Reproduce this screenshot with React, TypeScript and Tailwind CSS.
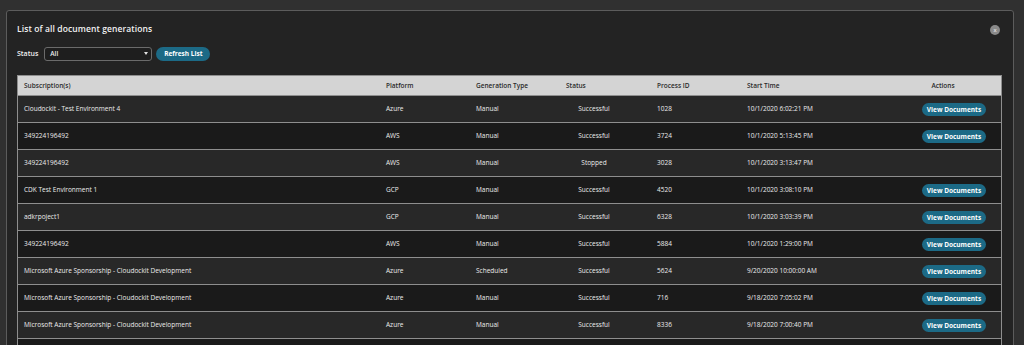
import React from "react";

type Row = {
  sub: string;
  platform: string;
  type: string;
  status: string;
  pid: string;
  start: string;
  action: boolean;
};

const rows: Row[] = [
  { sub: "Cloudockit - Test Environment 4", platform: "Azure", type: "Manual", status: "Successful", pid: "1028", start: "10/1/2020 6:02:21 PM", action: true },
  { sub: "349224196492", platform: "AWS", type: "Manual", status: "Successful", pid: "3724", start: "10/1/2020 5:13:45 PM", action: true },
  { sub: "349224196492", platform: "AWS", type: "Manual", status: "Stopped", pid: "3028", start: "10/1/2020 3:13:47 PM", action: false },
  { sub: "CDK Test Environment 1", platform: "GCP", type: "Manual", status: "Successful", pid: "4520", start: "10/1/2020 3:08:10 PM", action: true },
  { sub: "adkrpoject1", platform: "GCP", type: "Manual", status: "Successful", pid: "6328", start: "10/1/2020 3:03:39 PM", action: true },
  { sub: "349224196492", platform: "AWS", type: "Manual", status: "Successful", pid: "5884", start: "10/1/2020 1:29:00 PM", action: true },
  { sub: "Microsoft Azure Sponsorship - Cloudockit Development", platform: "Azure", type: "Scheduled", status: "Successful", pid: "5624", start: "9/20/2020 10:00:00 AM", action: true },
  { sub: "Microsoft Azure Sponsorship - Cloudockit Development", platform: "Azure", type: "Manual", status: "Successful", pid: "716", start: "9/18/2020 7:05:02 PM", action: true },
  { sub: "Microsoft Azure Sponsorship - Cloudockit Development", platform: "Azure", type: "Manual", status: "Successful", pid: "8336", start: "9/18/2020 7:00:40 PM", action: true },
  { sub: "", platform: "", type: "", status: "", pid: "", start: "", action: false },
];

export default function App() {
  return (
    <div
      className="w-[1024px] h-[345px] overflow-hidden bg-[#303030] pt-[10px] pl-[6px] pr-[10px] text-[#ececec]"
      style={{ fontFamily: '"Open Sans", "Noto Sans", sans-serif' }}
    >
      <div className="h-[400px] bg-[#232323] border border-[#5c5c5c] rounded-t-[3px] pl-[10px] pr-[11px] pt-[12px]">
        <div className="flex items-center justify-between h-[12px]">
          <div className="text-[8.5px] font-semibold text-[#f2f2f2] tracking-[0.1px]">List of all document generations</div>
          <div className="w-[10px] h-[10px] rounded-full bg-[#8a8a8a] text-white text-[6px] leading-[10px] text-center mr-[2px] mt-[2px]">x</div>
        </div>
        <div className="flex items-center mt-[12px] h-[14px]">
          <span className="text-[7px] font-semibold text-[#f2f2f2] mr-[6px]">Status</span>
          <div className="relative w-[108px] h-[14px] border border-[#6b6b6b] rounded-[3px] bg-[#1e1e1e] text-[6.5px] font-semibold leading-[12px] pl-[5px]">
            All
            <span className="absolute right-[3px] top-[4px] w-0 h-0 border-l-[2.5px] border-r-[2.5px] border-t-[3px] border-l-transparent border-r-transparent border-t-[#e0e0e0]" />
          </div>
          <div className="ml-[4px] w-[54px] h-[14px] rounded-full bg-[#1c6a86] text-white text-[6.5px] font-bold leading-[14px] text-center">
            Refresh List
          </div>
        </div>
        <div className="mt-[14px] border-l border-r border-[#8e8e8e]">
          <div className="grid grid-cols-[361px_90px_90px_90px_90px_146px_1fr] h-[21px] items-center bg-[#d4d4d4] border-t border-b border-[#8e8e8e] text-[#2a2a2a] text-[6.5px] font-semibold">
            <div className="pl-[6px]">Subscription(s)</div>
            <div className="pl-[7px]">Platform</div>
            <div className="pl-[7px]">Generation Type</div>
            <div className="pl-[7px]">Status</div>
            <div className="pl-[8px]">Process ID</div>
            <div className="pl-[8px]">Start Time</div>
            <div className="text-center">Actions</div>
          </div>
          {rows.map((r, i) => (
            <div
              key={i}
              className={`grid grid-cols-[361px_90px_90px_90px_90px_146px_1fr] h-[27px] items-center border-b border-[#8e8e8e] text-[6.5px] text-[#ececec] ${i % 2 === 0 ? "bg-[#282828]" : "bg-[#1a1a1a]"}`}
            >
              <div className="pl-[6px]">{r.sub}</div>
              <div className="pl-[7px]">{r.platform}</div>
              <div className="pl-[7px]">{r.type}</div>
              <div className="pl-[2px]">
                <div className="w-[66px] text-center">{r.status}</div>
              </div>
              <div className="pl-[8px]">{r.pid}</div>
              <div className="pl-[8px]">{r.start}</div>
              <div className="flex justify-end pr-[15px]">
                {r.action && (
                  <div className="w-[64px] h-[13px] rounded-full bg-[#1c6a86] text-white text-[6.5px] font-bold leading-[13px] text-center">
                    View Documents
                  </div>
                )}
              </div>
            </div>
          ))}
        </div>
      </div>
    </div>
  );
}
